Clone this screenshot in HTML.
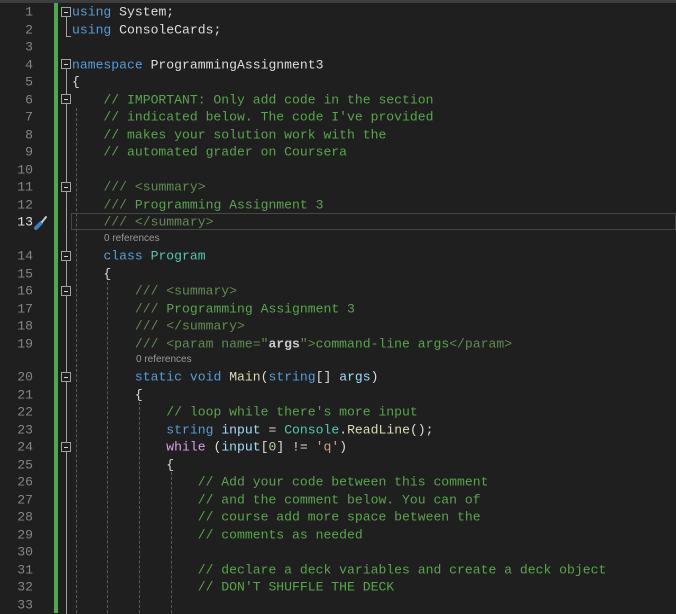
<!DOCTYPE html>
<html><head><meta charset="utf-8"><style>
body{margin:0;width:676px;height:613px;background:#1f1f1f;overflow:hidden;position:relative;font-family:"Liberation Mono",monospace;font-size:13.1px;}
.top{position:absolute;left:0;top:0;width:676px;height:3px;background:#3d3d3d}
.ln{position:absolute;left:0;width:33px;text-align:right;color:#858585;height:17.5px;line-height:17.5px;font-size:13.1px;transform:translateY(1.5px)}
.c{position:absolute;left:72px;white-space:pre;color:#dcdcdc;height:17.5px;line-height:17.5px;transform:translateY(1.5px)}
.ref{position:absolute;left:104px;font-family:"Liberation Sans",sans-serif;font-size:10px;color:#999;line-height:16px}
.k{color:#569cd6}.t{color:#4ec9b0}.cm{color:#57a64a}.d{color:#608b4e}.dt{color:#808080}.m{color:#dcdcaa}.v{color:#9cdcfe}.s{color:#d69d85}.cf{color:#d8a0df}.n{color:#b5cea8}
.bar{position:absolute;left:54px;top:3px;width:4px;height:610px;background:#4caa4c}
.fold{position:absolute;left:61px;width:8px;height:8px;border:1px solid #a0a0a0;background:#1f1f1f}
.fold:after{content:"";position:absolute;left:2px;top:3.5px;width:4px;height:1px;background:#d0d0d0}
.vl{position:absolute;left:66px;width:1px;background:#a0a0a0}
.g{position:absolute;width:0;border-left:1px dashed #5a5a5a}
</style></head><body>
<div class="top"></div>
<div class="bar"></div>
<div class="vl" style="top:17px;height:20px"></div>
<div style="position:absolute;left:66px;top:36px;width:5px;height:1px;background:#a0a0a0"></div>
<div class="vl" style="top:69px;height:545px"></div>
<div class="g" style="left:76px;top:108px;height:505px"></div>
<div class="g" style="left:107px;top:282px;height:331px"></div>
<div class="g" style="left:139px;top:402px;height:211px"></div>
<div class="g" style="left:171px;top:472px;height:141px"></div>
<div style="position:absolute;left:71px;top:213px;width:605px;height:17px;border:1px solid #464646;box-sizing:border-box"></div>
<div class="fold" style="top:7px"></div>
<div class="fold" style="top:59px"></div>
<div class="fold" style="top:94px"></div>
<div class="fold" style="top:182px"></div>
<div class="fold" style="top:251px"></div>
<div class="fold" style="top:286px"></div>
<div class="fold" style="top:372px"></div>
<div class="fold" style="top:442px"></div>
<svg style="position:absolute;left:33px;top:214px" width="16" height="16" viewBox="0 0 16 16"><path d="M3 14 L8 9" stroke="#3b7fc4" stroke-width="4" stroke-linecap="round"/><path d="M9 8 L13 3" stroke="#c8c8c8" stroke-width="2" stroke-linecap="round"/></svg>

<div class="ln" style="top:2px">1</div><div class="c" style="top:2px"><span class="k">using</span> System;</div>
<div class="ln" style="top:19.5px">2</div><div class="c" style="top:19.5px"><span class="k">using</span> ConsoleCards;</div>
<div class="ln" style="top:37px">3</div>
<div class="ln" style="top:54.5px">4</div><div class="c" style="top:54.5px"><span class="k">namespace</span> ProgrammingAssignment3</div>
<div class="ln" style="top:72px">5</div><div class="c" style="top:72px">{</div>
<div class="ln" style="top:89.5px">6</div><div class="c cm" style="top:89.5px">    // IMPORTANT: Only add code in the section</div>
<div class="ln" style="top:107px">7</div><div class="c cm" style="top:107px">    // indicated below. The code I've provided</div>
<div class="ln" style="top:124.5px">8</div><div class="c cm" style="top:124.5px">    // makes your solution work with the</div>
<div class="ln" style="top:142px">9</div><div class="c cm" style="top:142px">    // automated grader on Coursera</div>
<div class="ln" style="top:159.5px">10</div>
<div class="ln" style="top:177px">11</div><div class="c" style="top:177px">    <span class="d">///</span> <span class="d">&lt;summary&gt;</span></div>
<div class="ln" style="top:194.5px">12</div><div class="c" style="top:194.5px">    <span class="d">///</span> <span class="cm">Programming Assignment 3</span></div>
<div class="ln" style="top:212px;color:#e0e0e0">13</div><div class="c" style="top:212px">    <span class="d">///</span> <span class="d">&lt;/summary&gt;</span></div>
<div class="ref" style="top:231px">0 references</div>
<div class="ln" style="top:246px">14</div><div class="c" style="top:246px">    <span class="k">class</span> <span class="t">Program</span></div>
<div class="ln" style="top:263.5px">15</div><div class="c" style="top:263.5px">    {</div>
<div class="ln" style="top:281px">16</div><div class="c" style="top:281px">        <span class="d">/// &lt;summary&gt;</span></div>
<div class="ln" style="top:298.5px">17</div><div class="c" style="top:298.5px">        <span class="d">///</span> <span class="cm">Programming Assignment 3</span></div>
<div class="ln" style="top:316px">18</div><div class="c" style="top:316px">        <span class="d">/// &lt;/summary&gt;</span></div>
<div class="ln" style="top:333.5px">19</div><div class="c" style="top:333.5px">        <span class="d">/// &lt;param name="</span><b style="color:#c8c8c8">args</b><span class="d">"&gt;</span><span class="cm">command-line args</span><span class="d">&lt;/param&gt;</span></div>
<div class="ref" style="left:136px;top:352px">0 references</div>
<div class="ln" style="top:367px">20</div><div class="c" style="top:367px">        <span class="k">static</span> <span class="k">void</span> <span class="m">Main</span>(<span class="k">string</span>[] <span class="v">args</span>)</div>
<div class="ln" style="top:384.5px">21</div><div class="c" style="top:384.5px">        {</div>
<div class="ln" style="top:402px">22</div><div class="c" style="top:402px">            <span class="cm">// loop while there's more input</span></div>
<div class="ln" style="top:419.5px">23</div><div class="c" style="top:419.5px">            <span class="k">string</span> <span class="v">input</span> = <span class="t">Console</span>.<span class="m">ReadLine</span>();</div>
<div class="ln" style="top:437px">24</div><div class="c" style="top:437px">            <span class="cf">while</span> (<span class="v">input</span>[<span class="n">0</span>] != <span class="s">'q'</span>)</div>
<div class="ln" style="top:454.5px">25</div><div class="c" style="top:454.5px">            {</div>
<div class="ln" style="top:472px">26</div><div class="c cm" style="top:472px">                // Add your code between this comment</div>
<div class="ln" style="top:489.5px">27</div><div class="c cm" style="top:489.5px">                // and the comment below. You can of</div>
<div class="ln" style="top:507px">28</div><div class="c cm" style="top:507px">                // course add more space between the</div>
<div class="ln" style="top:524.5px">29</div><div class="c cm" style="top:524.5px">                // comments as needed</div>
<div class="ln" style="top:542px">30</div>
<div class="ln" style="top:559.5px">31</div><div class="c cm" style="top:559.5px">                // declare a deck variables and create a deck object</div>
<div class="ln" style="top:577px">32</div><div class="c cm" style="top:577px">                // DON'T SHUFFLE THE DECK</div>
<div class="ln" style="top:594.5px">33</div>
</body></html>
